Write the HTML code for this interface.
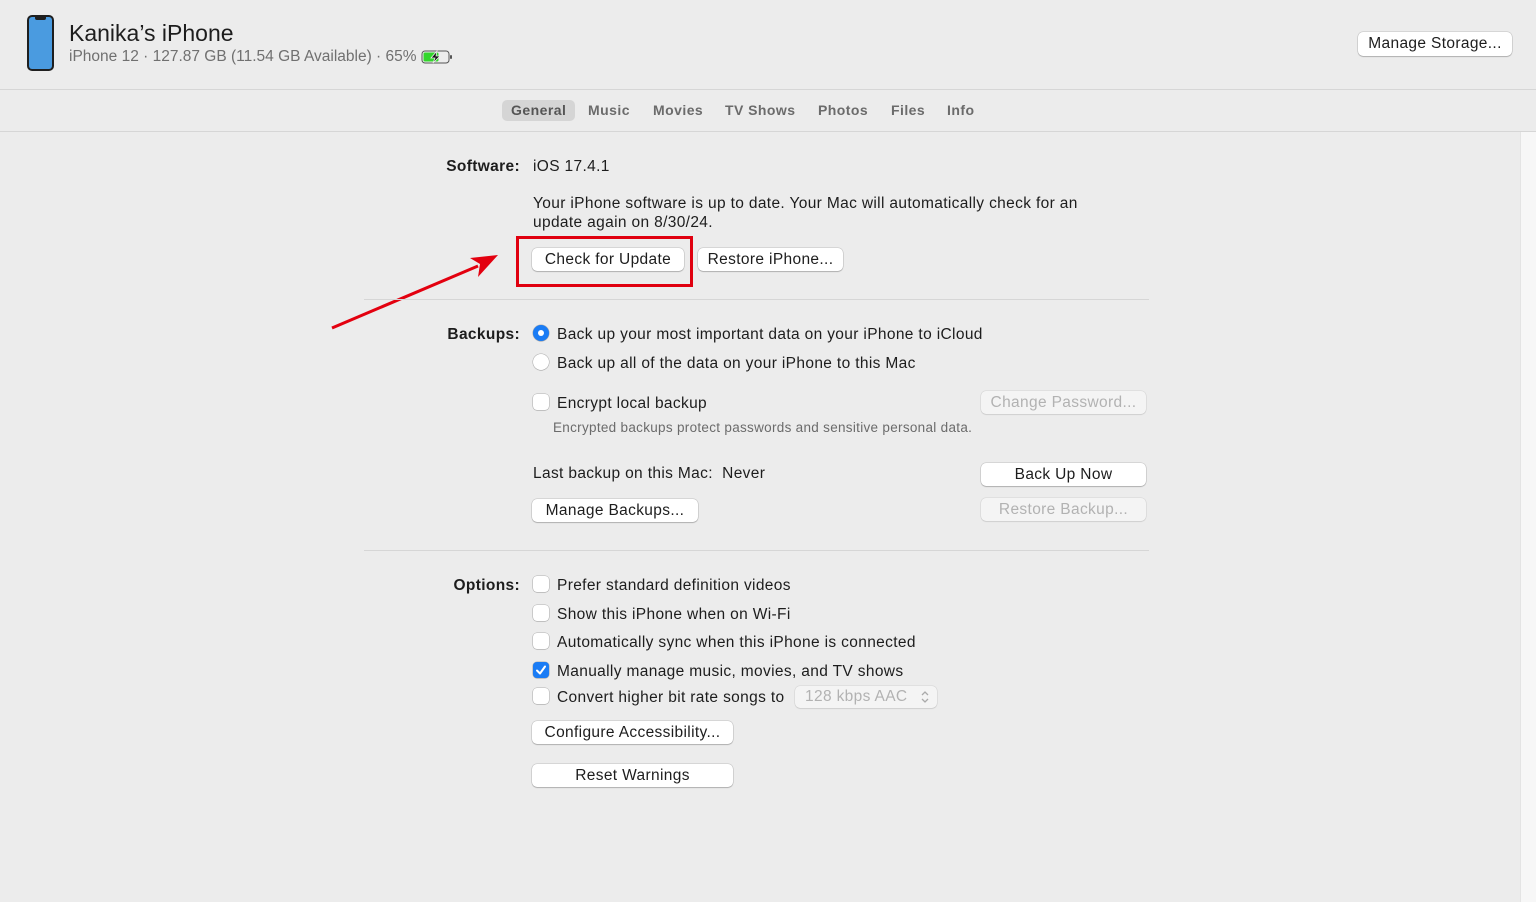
<!DOCTYPE html>
<html><head><meta charset="utf-8"><style>
*{margin:0;padding:0;box-sizing:border-box}
body{width:1536px;height:902px;background:#ececec;font-family:"Liberation Sans",sans-serif;color:#1d1d1d;position:relative;overflow:hidden;font-size:15.5px;letter-spacing:.35px}
.a{position:absolute;white-space:nowrap}
.btn{position:absolute;background:#fff;border-radius:5px;box-shadow:0 0 0 .5px rgba(0,0,0,.18),0 1px 1px rgba(0,0,0,.18);text-align:center;font-size:15.5px;line-height:23px;height:23px;color:#1d1d1d}
.dis{background:#f4f4f4;color:#b2b2b2;box-shadow:0 0 0 .5px rgba(0,0,0,.1),0 1px 1px rgba(0,0,0,.08)}
.lbl{position:absolute;font-weight:bold;right:1016px;white-space:nowrap}
.cb{position:absolute;left:533px;width:16px;height:16px;border-radius:4px;background:#fff;box-shadow:0 0 0 .5px rgba(0,0,0,.25),0 .5px 1px rgba(0,0,0,.15)}
.rd{position:absolute;left:533px;width:16px;height:16px;border-radius:50%;background:#fff;box-shadow:0 0 0 .5px rgba(0,0,0,.25),0 .5px 1px rgba(0,0,0,.15)}
.t{position:absolute;left:557px;white-space:nowrap}
.tab{position:absolute;top:101px;font-size:14px;font-weight:bold;color:#6b6b6b;line-height:19px;letter-spacing:.45px}
.hr{position:absolute;height:1px;background:#d6d6d6}
</style></head><body>
<div class="a" style="left:27px;top:15px;width:27px;height:56px;border-radius:5px;background:#1f1f1f"></div>
<div class="a" style="left:29px;top:17px;width:23px;height:52px;border-radius:3px;background:#4a9be0"></div>
<div class="a" style="left:35px;top:17px;width:11px;height:3px;border-radius:0 0 2px 2px;background:#1f1f1f"></div>
<div class="a" style="left:69px;top:20px;font-size:23px;color:#1d1d1d;letter-spacing:0">Kanika’s iPhone</div>
<div class="a" style="left:69px;top:48px;font-size:15.5px;color:#707070;letter-spacing:0">iPhone 12 · 127.87 GB (11.54 GB Available) · 65%</div>
<svg class="a" style="left:421px;top:49px" width="32" height="16" viewBox="0 0 32 16"><rect x="1" y="2" width="27" height="12" rx="3" fill="none" stroke="#555" stroke-width="1"/><rect x="2.5" y="3.5" width="15" height="9" rx="1.5" fill="#32d62c"/><rect x="29" y="6" width="2" height="4" rx="1" fill="#555"/><path d="M16 2 L10 9 H14 L12 14 L19 7 H15 Z" fill="#111" stroke="#eee" stroke-width=".8"/></svg>
<div class="btn" style="left:1358px;top:32px;width:154px;height:24px;line-height:24px">Manage Storage...</div>
<div class="hr" style="left:0;top:89px;width:1536px"></div>
<div class="hr" style="left:0;top:131px;width:1536px"></div>
<div class="a" style="left:1520px;top:132px;width:16px;height:770px;background:#f7f7f7;border-left:1px solid #e4e4e4"></div>
<div class="a" style="left:502px;top:100px;width:73px;height:21px;border-radius:5px;background:#d5d5d5"></div>
<div class="tab" style="left:511px;color:#555">General</div>
<div class="tab" style="left:588px">Music</div>
<div class="tab" style="left:653px">Movies</div>
<div class="tab" style="left:725px">TV Shows</div>
<div class="tab" style="left:818px">Photos</div>
<div class="tab" style="left:891px">Files</div>
<div class="tab" style="left:947px">Info</div>

<div class="lbl" style="top:158px">Software:</div>
<div class="a" style="left:533px;top:158px">iOS 17.4.1</div>
<div class="a" style="left:533px;top:194px;line-height:19px">Your iPhone software is up to date. Your Mac will automatically check for an<br>update again on 8/30/24.</div>
<div class="btn" style="left:532px;top:248px;width:152px">Check for Update</div>
<div class="btn" style="left:698px;top:248px;width:145px">Restore iPhone...</div>
<div class="a" style="left:516px;top:236px;width:177px;height:51px;border:3px solid #e0000f"></div>
<svg class="a" style="left:0;top:0" width="600" height="400"><path d="M332 328 L478 266" stroke="#e3000f" stroke-width="3"/><path d="M498 255 L470 258 L480 264 L478 277 Z" fill="#e3000f"/></svg>
<div class="hr" style="left:364px;top:299px;width:785px"></div>

<div class="lbl" style="top:326px">Backups:</div>
<div class="rd" style="top:325px;background:#1a7cf5"></div><div class="a" style="left:538px;top:330px;width:6px;height:6px;border-radius:50%;background:#fff"></div>
<div class="t" style="top:326px">Back up your most important data on your iPhone to iCloud</div>
<div class="rd" style="top:354px"></div>
<div class="t" style="top:355px">Back up all of the data on your iPhone to this Mac</div>
<div class="cb" style="top:394px"></div>
<div class="t" style="top:395px">Encrypt local backup</div>
<div class="btn dis" style="left:981px;top:391px;width:165px">Change Password...</div>
<div class="a" style="left:553px;top:420px;font-size:13.5px;letter-spacing:.3px;color:#6b6b6b">Encrypted backups protect passwords and sensitive personal data.</div>
<div class="a" style="left:533px;top:465px">Last backup on this Mac:&nbsp; Never</div>
<div class="btn" style="left:981px;top:463px;width:165px">Back Up Now</div>
<div class="btn" style="left:532px;top:499px;width:166px">Manage Backups...</div>
<div class="btn dis" style="left:981px;top:498px;width:165px">Restore Backup...</div>
<div class="hr" style="left:364px;top:550px;width:785px"></div>

<div class="lbl" style="top:577px">Options:</div>
<div class="cb" style="top:576px"></div><div class="t" style="top:577px">Prefer standard definition videos</div>
<div class="cb" style="top:605px"></div><div class="t" style="top:606px">Show this iPhone when on Wi-Fi</div>
<div class="cb" style="top:633px"></div><div class="t" style="top:634px">Automatically sync when this iPhone is connected</div>
<div class="cb" style="top:662px;background:#1a7cf5"></div>
<svg class="a" style="left:533px;top:662px" width="16" height="16"><path d="M4 8.5 L7 11.5 L12 4.5" stroke="#fff" stroke-width="2" fill="none" stroke-linecap="round" stroke-linejoin="round"/></svg>
<div class="t" style="top:663px">Manually manage music, movies, and TV shows</div>
<div class="cb" style="top:688px"></div><div class="t" style="top:689px">Convert higher bit rate songs to</div>
<div class="btn dis" style="left:795px;top:686px;width:142px;height:22px;line-height:22px;text-align:left;padding-left:10px">128 kbps AAC</div>
<svg class="a" style="left:919px;top:689px" width="12" height="16"><path d="M3 6 L6 3 L9 6 M3 10 L6 13 L9 10" stroke="#aaa" stroke-width="1.3" fill="none"/></svg>
<div class="btn" style="left:532px;top:721px;width:201px">Configure Accessibility...</div>
<div class="btn" style="left:532px;top:764px;width:201px">Reset Warnings</div>
</body></html>
